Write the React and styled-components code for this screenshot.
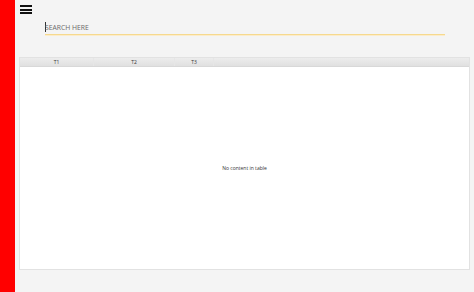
import React from "react";
import styled, { createGlobalStyle } from "styled-components";

const Global = createGlobalStyle`
  html, body { margin: 0; padding: 0; width: 474px; height: 292px; overflow: hidden; background: #f4f4f4; }
  #root { width: 474px; height: 292px; }
`;

const Page = styled.div`
  display: flex;
  width: 474px;
  height: 292px;
  font-family: "Open Sans", "Liberation Sans", sans-serif;
`;

const Sidebar = styled.div`
  width: 15px;
  flex: none;
  background: #ff0000;
`;

const Main = styled.div`
  flex: 1;
  display: flex;
  flex-direction: column;
  background: #f4f4f4;
  padding: 4px 4px 22px 4px;
`;

const MenuButton = styled.div`
  width: 12px;
  height: 9px;
  margin-left: 1px;
  margin-top: 1px;
  display: flex;
  flex-direction: column;
  justify-content: space-between;
`;

const Bar = styled.span`
  display: block;
  height: 2px;
  background: #111;
`;

const SearchRow = styled.div`
  padding: 6px 25px 0 26px;
`;

const SearchField = styled.div`
  height: 14px;
  border-bottom: 1px solid #f6d98e;
  box-shadow: 0 1px 0 #fbeccb;
  display: flex;
  align-items: center;
  font-size: 6.8px;
  font-weight: 400;
  color: #6a6a6a;
`;

const Caret = styled.span`
  display: inline-block;
  width: 1px;
  height: 10px;
  background: #333;
  margin-right: -1px;
`;

const Table = styled.div`
  margin-top: 22px;
  flex: 1;
  display: flex;
  flex-direction: column;
  background: #fff;
  border: 1px solid #e2e2e2;
`;

const Header = styled.div`
  display: flex;
  height: 8px;
  background: linear-gradient(#ececec, #e0e0e0);
  border-bottom: 1px solid #d8d8d8;
`;

const HeadCell = styled.div`
  width: ${(p) => p.w}px;
  flex: none;
  display: flex;
  align-items: center;
  justify-content: center;
  font-size: 5px;
  font-weight: 400;
  color: #333;
  border-right: 1px solid #e6e6e6;
`;

const Body = styled.div`
  flex: 1;
  display: flex;
  align-items: center;
  justify-content: center;
  font-size: 5px;
  color: #333;
`;

export default function App() {
  return (
    <>
      <Global />
      <Page>
        <Sidebar />
        <Main>
          <MenuButton>
            <Bar />
            <Bar />
            <Bar />
          </MenuButton>
          <SearchRow>
            <SearchField>
              <Caret />
              SEARCH HERE
            </SearchField>
          </SearchRow>
          <Table>
            <Header>
              <HeadCell w={73}>T1</HeadCell>
              <HeadCell w={80}>T2</HeadCell>
              <HeadCell w={38}>T3</HeadCell>
            </Header>
            <Body>No content in table</Body>
          </Table>
        </Main>
      </Page>
    </>
  );
}
